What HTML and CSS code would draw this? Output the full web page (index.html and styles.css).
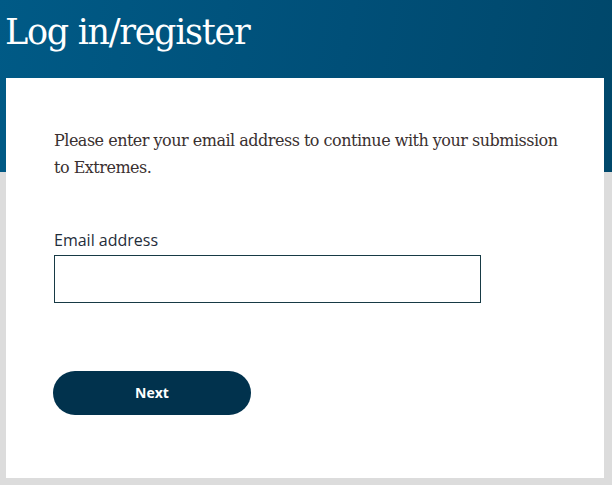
FILE: index.html
```html
<!DOCTYPE html>
<html lang="en">
<head>
<meta charset="utf-8">
<title>Log in/register</title>
<link rel="stylesheet" href="styles.css">
</head>
<body>
<header class="masthead">
  <h1 class="title">Log in/register</h1>
</header>
<main class="card">
  <p class="intro">Please enter your email address to continue with your submission to Extremes.</p>
  <form class="form">
    <label class="label" for="email">Email address</label>
    <input class="input" id="email" type="email">
    <button class="btn" type="button">Next</button>
  </form>
</main>
</body>
</html>
```
FILE: styles.css
```css
html, body {
  margin: 0;
  padding: 0;
}
body {
  width: 612px;
  height: 485px;
  overflow: hidden;
  background:
    linear-gradient(100deg, #005a86 0%, #004f78 55%, #00476a 100%) top left / 100% 172px no-repeat,
    #dcdcdc;
}
.masthead {
  height: 78px;
  box-sizing: border-box;
  padding: 9px 0 0 5px;
}
.title {
  margin: 0;
  font-family: "DejaVu Serif", "Liberation Serif", serif;
  font-weight: normal;
  font-size: 35px;
  line-height: 46px;
  color: #ffffff;
  letter-spacing: -1.3px;
}
.card {
  display: block;
  margin: 0 8px 0 6px;
  height: 400px;
  box-sizing: border-box;
  background: #ffffff;
  padding: 49px 48px 0 48px;
}
.intro {
  margin: 0;
  font-family: "DejaVu Serif", "Liberation Serif", serif;
  font-size: 16px;
  line-height: 27px;
  letter-spacing: -0.5px;
  color: #3a3030;
  width: 510px;
}
.form {
  display: flex;
  flex-direction: column;
  align-items: flex-start;
  margin-top: 47px;
}
.label {
  font-family: "Open Sans", "Noto Sans", sans-serif;
  font-size: 16px;
  line-height: 24px;
  color: #1f2d3a;
  margin-bottom: 3px;
}
.input {
  width: 427px;
  height: 48px;
  box-sizing: border-box;
  border: 1px solid #173a45;
  border-radius: 0;
  margin: 0;
  padding: 0 10px;
  background: #fff;
  outline: none;
}
.btn {
  margin-top: 68px;
  margin-left: -1px;
  width: 198px;
  height: 44px;
  border: 0;
  border-radius: 22px;
  background: #01324d;
  color: #ffffff;
  font-family: "Open Sans", "Noto Sans", sans-serif;
  font-weight: 700;
  font-size: 14px;
  line-height: 44px;
  padding: 0 0 2px 0;
  cursor: pointer;
}
```
